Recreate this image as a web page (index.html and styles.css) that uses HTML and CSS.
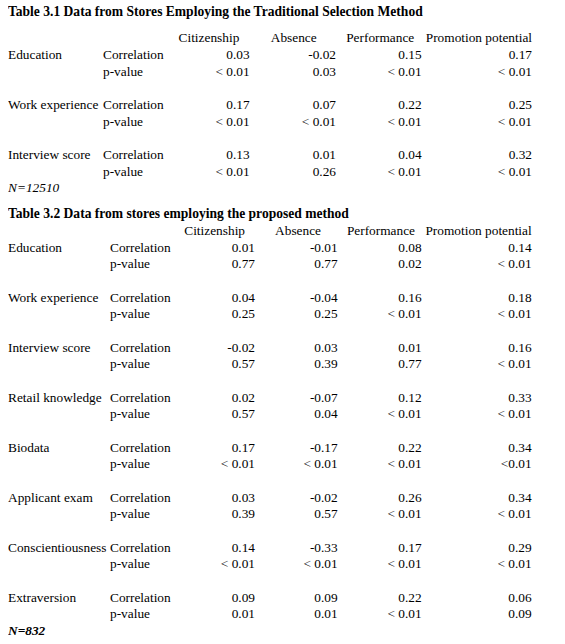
FILE: index.html
```html
<!DOCTYPE html>
<html lang="en">
<head>
<meta charset="utf-8">
<title>Tables 3.1 and 3.2</title>
<link rel="stylesheet" href="styles.css">
</head>
<body>
<p class="title title-first">Table 3.1 Data from Stores Employing the Traditional Selection Method</p>
<table class="data t1">
  <colgroup>
    <col class="c-label"><col class="c-type"><col class="c-cit"><col class="c-abs"><col class="c-perf"><col class="c-prom">
  </colgroup>
  <tr class="head">
    <td></td><td></td><td class="h-cit">Citizenship</td><td class="h-abs">Absence</td><td class="h-perf">Performance</td><td class="h-prom">Promotion potential</td>
  </tr>
  <tr><td>Education</td><td>Correlation</td><td class="num">0.03</td><td class="num">-0.02</td><td class="num">0.15</td><td class="num">0.17</td></tr>
  <tr><td></td><td>p-value</td><td class="num">&lt; 0.01</td><td class="num">0.03</td><td class="num">&lt; 0.01</td><td class="num">&lt; 0.01</td></tr>
  <tr class="blank"><td colspan="6">&nbsp;</td></tr>
  <tr><td>Work experience</td><td>Correlation</td><td class="num">0.17</td><td class="num">0.07</td><td class="num">0.22</td><td class="num">0.25</td></tr>
  <tr><td></td><td>p-value</td><td class="num">&lt; 0.01</td><td class="num">&lt; 0.01</td><td class="num">&lt; 0.01</td><td class="num">&lt; 0.01</td></tr>
  <tr class="blank"><td colspan="6">&nbsp;</td></tr>
  <tr><td>Interview score</td><td>Correlation</td><td class="num">0.13</td><td class="num">0.01</td><td class="num">0.04</td><td class="num">0.32</td></tr>
  <tr><td></td><td>p-value</td><td class="num">&lt; 0.01</td><td class="num">0.26</td><td class="num">&lt; 0.01</td><td class="num">&lt; 0.01</td></tr>
</table>
<p class="note note-first">N=12510</p>

<p class="title">Table 3.2 Data from stores employing the proposed method</p>
<table class="data t2">
  <colgroup>
    <col class="c-label"><col class="c-type"><col class="c-cit"><col class="c-abs"><col class="c-perf"><col class="c-prom">
  </colgroup>
  <tr class="head">
    <td></td><td></td><td class="h-cit">Citizenship</td><td class="h-abs">Absence</td><td class="h-perf">Performance</td><td class="h-prom">Promotion potential</td>
  </tr>
  <tr><td>Education</td><td>Correlation</td><td class="num">0.01</td><td class="num">-0.01</td><td class="num">0.08</td><td class="num">0.14</td></tr>
  <tr><td></td><td>p-value</td><td class="num">0.77</td><td class="num">0.77</td><td class="num">0.02</td><td class="num">&lt; 0.01</td></tr>
  <tr class="blank"><td colspan="6">&nbsp;</td></tr>
  <tr><td>Work experience</td><td>Correlation</td><td class="num">0.04</td><td class="num">-0.04</td><td class="num">0.16</td><td class="num">0.18</td></tr>
  <tr><td></td><td>p-value</td><td class="num">0.25</td><td class="num">0.25</td><td class="num">&lt; 0.01</td><td class="num">&lt; 0.01</td></tr>
  <tr class="blank"><td colspan="6">&nbsp;</td></tr>
  <tr><td>Interview score</td><td>Correlation</td><td class="num">-0.02</td><td class="num">0.03</td><td class="num">0.01</td><td class="num">0.16</td></tr>
  <tr><td></td><td>p-value</td><td class="num">0.57</td><td class="num">0.39</td><td class="num">0.77</td><td class="num">&lt; 0.01</td></tr>
  <tr class="blank"><td colspan="6">&nbsp;</td></tr>
  <tr><td>Retail knowledge</td><td>Correlation</td><td class="num">0.02</td><td class="num">-0.07</td><td class="num">0.12</td><td class="num">0.33</td></tr>
  <tr><td></td><td>p-value</td><td class="num">0.57</td><td class="num">0.04</td><td class="num">&lt; 0.01</td><td class="num">&lt; 0.01</td></tr>
  <tr class="blank"><td colspan="6">&nbsp;</td></tr>
  <tr><td>Biodata</td><td>Correlation</td><td class="num">0.17</td><td class="num">-0.17</td><td class="num">0.22</td><td class="num">0.34</td></tr>
  <tr><td></td><td>p-value</td><td class="num">&lt; 0.01</td><td class="num">&lt; 0.01</td><td class="num">&lt; 0.01</td><td class="num">&lt;0.01</td></tr>
  <tr class="blank"><td colspan="6">&nbsp;</td></tr>
  <tr><td>Applicant exam</td><td>Correlation</td><td class="num">0.03</td><td class="num">-0.02</td><td class="num">0.26</td><td class="num">0.34</td></tr>
  <tr><td></td><td>p-value</td><td class="num">0.39</td><td class="num">0.57</td><td class="num">&lt; 0.01</td><td class="num">&lt; 0.01</td></tr>
  <tr class="blank"><td colspan="6">&nbsp;</td></tr>
  <tr><td>Conscientiousness</td><td>Correlation</td><td class="num">0.14</td><td class="num">-0.33</td><td class="num">0.17</td><td class="num">0.29</td></tr>
  <tr><td></td><td>p-value</td><td class="num">&lt; 0.01</td><td class="num">&lt; 0.01</td><td class="num">&lt; 0.01</td><td class="num">&lt; 0.01</td></tr>
  <tr class="blank"><td colspan="6">&nbsp;</td></tr>
  <tr><td>Extraversion</td><td>Correlation</td><td class="num">0.09</td><td class="num">0.09</td><td class="num">0.22</td><td class="num">0.06</td></tr>
  <tr><td></td><td>p-value</td><td class="num">0.01</td><td class="num">0.01</td><td class="num">&lt; 0.01</td><td class="num">0.09</td></tr>
</table>
<p class="note note-bold">N=832</p>
</body>
</html>
```

FILE: styles.css
```css
html {
  background: #ffffff;
}

body {
  margin: 4.17px 8px 0;
  color: #000000;
  font-family: "Liberation Serif", "Times New Roman", serif;
  font-size: 13.333px;
  line-height: 16.667px;
}

p {
  margin: 0;
}

.title {
  font-weight: bold;
  font-size: 13.55px;
}

.title-first {
  margin-bottom: 9.33px;
}

.note {
  font-style: italic;
}

.note-first {
  margin-bottom: 9.33px;
}

.note-bold {
  font-weight: bold;
}

.data {
  border-collapse: collapse;
  border-spacing: 0;
  table-layout: fixed;
}

.data td {
  padding: 0;
  white-space: nowrap;
  vertical-align: baseline;
  height: 16.667px;
  line-height: 16.667px;
}

.data .num {
  text-align: right;
}

.data .head td {
  text-align: right;
}

/* Table 3.1 column geometry */
.t1 {
  width: 524px;
}
.t1 .c-label { width: 95px; }
.t1 .c-type { width: 67px; }
.t1 .c-cit { width: 79.7px; }
.t1 .c-abs { width: 86.3px; }
.t1 .c-perf { width: 85.7px; }
.t1 .c-prom { width: 110.3px; }

.t1 .h-cit { padding-right: 10.4px; }
.t1 .h-abs { padding-right: 19.3px; }
.t1 .h-perf { padding-right: 7.4px; }
.t1 .h-prom { padding-right: 0; }

/* Table 3.2 column geometry */
.t2 {
  width: 523.7px;
}
.t2 .c-label { width: 102px; }
.t2 .c-type { width: 64px; }
.t2 .c-cit { width: 81px; }
.t2 .c-abs { width: 82.7px; }
.t2 .c-perf { width: 84px; }
.t2 .c-prom { width: 110px; }

.t2 .h-cit { padding-right: 10px; }
.t2 .h-abs { padding-right: 16.7px; }
.t2 .h-perf { padding-right: 6.7px; }
.t2 .h-prom { padding-right: 0; }
```
